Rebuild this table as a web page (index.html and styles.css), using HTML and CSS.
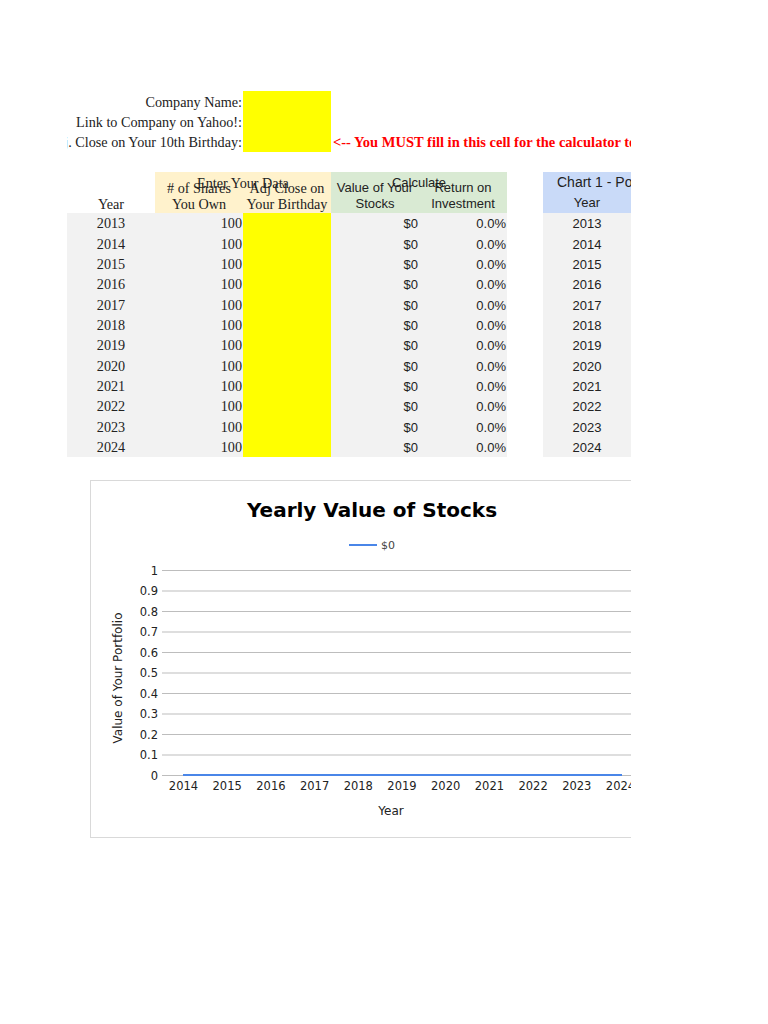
FILE: index.html
```html
<!DOCTYPE html>
<html>
<head>
<meta charset="utf-8">
<title>Stock Calculator</title>
<link rel="stylesheet" href="styles.css">
</head>
<body>
<div class="page">
  <div class="info">
    <div class="label"><span>Company Name:</span></div><div class="fill"></div><div class="note"></div>
    <div class="label"><span>Link to Company on Yahoo!:</span></div><div class="fill"></div><div class="note"></div>
    <div class="label"><span>Adj. Close on Your 10th Birthday:</span></div><div class="fill"></div><div class="note warn">&lt;-- You MUST fill in this cell for the calculator to work</div>
  </div>
  <div class="spacer"></div>
  <div class="thead">
    <div class="h h-year serif"><span>Year</span></div>
    <div class="h h-shares serif enter"><span># of Shares</span><span>You Own</span></div>
    <div class="h h-adj serif enter"><span>Adj Close on</span><span>Your Birthday</span></div>
    <div class="grp grp-enter serif">Enter Your Data</div>
    <div class="h h-value sans calc"><span>Value of Your</span><span>Stocks</span></div>
    <div class="h h-return sans calc"><span>Return on</span><span>Investment</span></div>
    <div class="grp grp-calc sans">Calculate</div>
    <div class="h h-chart sans"><span class="chart-title">Chart 1 - Portfolio Value</span><span>Year</span></div>
  </div>
  <div class="tbody">
    <div class="c yr serif">2013</div><div class="c num serif">100</div><div class="c fillc"></div><div class="c num sans">$0</div><div class="c num sans">0.0%</div><div class="gap"></div><div class="c yr sans">2013</div>
    <div class="c yr serif">2014</div><div class="c num serif">100</div><div class="c fillc"></div><div class="c num sans">$0</div><div class="c num sans">0.0%</div><div class="gap"></div><div class="c yr sans">2014</div>
    <div class="c yr serif">2015</div><div class="c num serif">100</div><div class="c fillc"></div><div class="c num sans">$0</div><div class="c num sans">0.0%</div><div class="gap"></div><div class="c yr sans">2015</div>
    <div class="c yr serif">2016</div><div class="c num serif">100</div><div class="c fillc"></div><div class="c num sans">$0</div><div class="c num sans">0.0%</div><div class="gap"></div><div class="c yr sans">2016</div>
    <div class="c yr serif">2017</div><div class="c num serif">100</div><div class="c fillc"></div><div class="c num sans">$0</div><div class="c num sans">0.0%</div><div class="gap"></div><div class="c yr sans">2017</div>
    <div class="c yr serif">2018</div><div class="c num serif">100</div><div class="c fillc"></div><div class="c num sans">$0</div><div class="c num sans">0.0%</div><div class="gap"></div><div class="c yr sans">2018</div>
    <div class="c yr serif">2019</div><div class="c num serif">100</div><div class="c fillc"></div><div class="c num sans">$0</div><div class="c num sans">0.0%</div><div class="gap"></div><div class="c yr sans">2019</div>
    <div class="c yr serif">2020</div><div class="c num serif">100</div><div class="c fillc"></div><div class="c num sans">$0</div><div class="c num sans">0.0%</div><div class="gap"></div><div class="c yr sans">2020</div>
    <div class="c yr serif">2021</div><div class="c num serif">100</div><div class="c fillc"></div><div class="c num sans">$0</div><div class="c num sans">0.0%</div><div class="gap"></div><div class="c yr sans">2021</div>
    <div class="c yr serif">2022</div><div class="c num serif">100</div><div class="c fillc"></div><div class="c num sans">$0</div><div class="c num sans">0.0%</div><div class="gap"></div><div class="c yr sans">2022</div>
    <div class="c yr serif">2023</div><div class="c num serif">100</div><div class="c fillc"></div><div class="c num sans">$0</div><div class="c num sans">0.0%</div><div class="gap"></div><div class="c yr sans">2023</div>
    <div class="c yr serif">2024</div><div class="c num serif">100</div><div class="c fillc"></div><div class="c num sans">$0</div><div class="c num sans">0.0%</div><div class="gap"></div><div class="c yr sans">2024</div>
  </div>

  <div class="chart">
    <svg class="chart-svg" width="562" height="356" viewBox="0 0 562 356">
      <text class="ct" x="281" y="36" text-anchor="middle">Yearly Value of Stocks</text>
      <line x1="258" y1="64" x2="286" y2="64" stroke="#4a86e8" stroke-width="2"/>
      <text class="lg" x="290" y="68">$0</text>

      <g stroke="#bdbdbd" stroke-width="1">
        <line x1="71" y1="89.5" x2="600" y2="89.5"/>
        <line x1="71" y1="110" x2="600" y2="110"/>
        <line x1="71" y1="130.5" x2="600" y2="130.5"/>
        <line x1="71" y1="151" x2="600" y2="151"/>
        <line x1="71" y1="171.5" x2="600" y2="171.5"/>
        <line x1="71" y1="192" x2="600" y2="192"/>
        <line x1="71" y1="212.5" x2="600" y2="212.5"/>
        <line x1="71" y1="233" x2="600" y2="233"/>
        <line x1="71" y1="253.5" x2="600" y2="253.5"/>
        <line x1="71" y1="274" x2="600" y2="274"/>
        <line x1="71" y1="294.5" x2="600" y2="294.5"/>
      </g>
      <g class="tk" text-anchor="end">
        <text x="67" y="93.5">1</text>
        <text x="67" y="114">0.9</text>
        <text x="67" y="134.5">0.8</text>
        <text x="67" y="155">0.7</text>
        <text x="67" y="175.5">0.6</text>
        <text x="67" y="196">0.5</text>
        <text x="67" y="216.5">0.4</text>
        <text x="67" y="237">0.3</text>
        <text x="67" y="257.5">0.2</text>
        <text x="67" y="278">0.1</text>
        <text x="67" y="298.5">0</text>
      </g>
      <line x1="92" y1="294" x2="531" y2="294" stroke="#4a86e8" stroke-width="2"/>
      <g class="tk" text-anchor="middle">
        <text x="92.5" y="309">2014</text>
        <text x="136.2" y="309">2015</text>
        <text x="179.9" y="309">2016</text>
        <text x="223.6" y="309">2017</text>
        <text x="267.3" y="309">2018</text>
        <text x="311" y="309">2019</text>
        <text x="354.7" y="309">2020</text>
        <text x="398.4" y="309">2021</text>
        <text x="442.1" y="309">2022</text>
        <text x="485.8" y="309">2023</text>
        <text x="529.5" y="309">2024</text>
      </g>
      <text class="at" x="300" y="334" text-anchor="middle">Year</text>
      <text class="at" x="0" y="0" text-anchor="middle" transform="translate(31 197) rotate(-90)">Value of Your Portfolio</text>
    </svg>
  </div>
</div>
</body>
</html>
```

FILE: styles.css
```css
html, body {
  margin: 0;
  padding: 0;
  background: #ffffff;
}

.page {
  margin-left: 67px;
  padding-top: 91px;
  width: 564px;
  overflow: hidden;
  color: #222222;
}

.serif {
  font-family: "Liberation Serif", "Times New Roman", serif;
  font-size: 14.2px;
}

.sans {
  font-family: "Liberation Sans", Arial, sans-serif;
  font-size: 13px;
}

/* info block */
.info {
  display: grid;
  grid-template-columns: 176px 88px 300px;
  grid-auto-rows: 20.33px;
  font-family: "Liberation Serif", "Times New Roman", serif;
  font-size: 14.2px;
}

.label {
  display: flex;
  justify-content: flex-end;
  align-items: center;
  overflow: hidden;
  white-space: nowrap;
  padding-right: 1px;
  padding-top: 2px;
}

.fill {
  background: #ffff00;
}

.note {
  display: flex;
  align-items: center;
  overflow: hidden;
  white-space: nowrap;
  padding-left: 2px;
  padding-top: 2px;
}

.warn {
  color: #ff0000;
  font-weight: bold;
  font-size: 14.5px;
}

.spacer {
  height: 20.33px;
}

/* table header */
.thead {
  display: grid;
  grid-template-columns: 88px 88px 88px 88px 88px 36px 88px;
  grid-template-rows: 20.5px 20.5px;
}

.h {
  grid-row: 1 / 3;
  display: flex;
  flex-direction: column;
  justify-content: flex-end;
  align-items: center;
  line-height: 16px;
  padding-bottom: 1px;
  white-space: nowrap;
  overflow: hidden;
}

.h-year { grid-column: 1; }
.h-shares { grid-column: 2; }
.h-adj { grid-column: 3; }
.h-value { grid-column: 4; }
.h-return { grid-column: 5; }
.h-chart {
  grid-column: 7;
  background: #c9daf8;
  align-items: stretch;
  justify-content: center;
  text-align: center;
  padding-bottom: 0;
  line-height: 20.5px;
}

.chart-title {
  text-align: left;
  padding-left: 14px;
  white-space: nowrap;
  font-size: 14px;
}

.enter { background: #fff2cc; }
.calc { background: #d9ead3; }

.grp {
  grid-row: 1;
  display: flex;
  align-items: center;
  justify-content: center;
  white-space: nowrap;
  position: relative;
  z-index: 1;
}

.grp-enter { grid-column: 2 / 4; padding-top: 2px; }
.grp-calc { grid-column: 4 / 6; }

/* table body */
.tbody {
  display: grid;
  grid-template-columns: 88px 88px 88px 88px 88px 36px 88px;
  grid-auto-rows: 20.33px;
}

.c {
  background: #f2f2f2;
  display: flex;
  align-items: center;
  white-space: nowrap;
  padding-top: 1px;
}

.yr { justify-content: center; }
.num { justify-content: flex-end; padding-right: 1px; }
.fillc { background: #ffff00; }
.gap { background: #ffffff; }

/* chart */
.chart {
  margin-top: 23px;
  margin-left: 23px;
  width: 562px;
  height: 356px;
  border: 1px solid #d9d9d9;
  background: #ffffff;
}

.chart-svg {
  display: block;
  font-family: "DejaVu Sans", Verdana, sans-serif;
}

.ct {
  font-size: 20px;
  font-weight: bold;
  fill: #000000;
}

.lg {
  font-size: 11px;
  fill: #444444;
}

.tk text {
  font-size: 11.5px;
  fill: #222222;
}

.at {
  font-size: 12px;
  fill: #222222;
}
```
